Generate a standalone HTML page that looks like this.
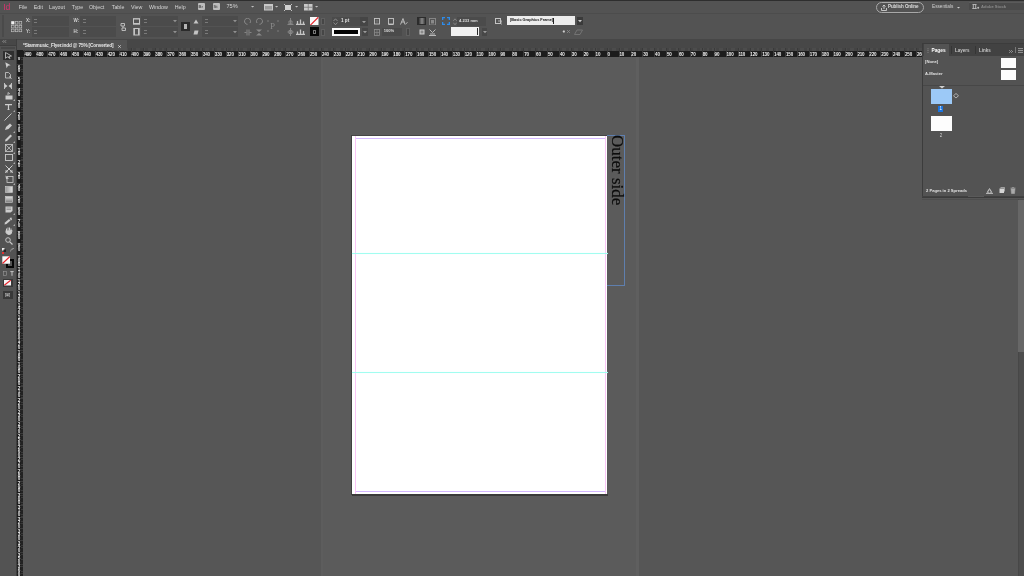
<!DOCTYPE html>
<html><head><meta charset="utf-8"><style>
*{margin:0;padding:0;box-sizing:border-box}
html,body{width:1024px;height:576px;overflow:hidden;background:#565656;font-family:"Liberation Sans",sans-serif;color:#ddd;position:relative}
.a{position:absolute}
.t{position:absolute;white-space:nowrap;line-height:1}
#root{position:absolute;left:0;top:0;width:1024px;height:576px;overflow:hidden;will-change:transform}
</style></head><body><div id="root">
<div class="a" style="left:0px;top:0px;width:1024px;height:1px;background:#2e2e2e"></div>
<div class="a" style="left:0px;top:1px;width:1024px;height:13px;background:#535353"></div>
<div class="a" style="left:0px;top:13px;width:1024px;height:1px;background:#4c4c4c"></div>
<div class="a" style="left:0px;top:14px;width:1024px;height:25px;background:#535353"></div>
<div class="a" style="left:0px;top:39px;width:1024px;height:9px;background:#474747"></div>
<div class="a" style="left:23px;top:57px;width:299px;height:519px;background:#565656"></div>
<div class="a" style="left:322px;top:57px;width:317px;height:519px;background:#5b5b5b"></div>
<div class="a" style="left:636px;top:57px;width:3px;height:519px;background:#5f5f5f"></div>
<div class="a" style="left:321px;top:57px;width:1.5px;height:519px;background:#5d5d5d"></div>
<div class="a" style="left:639px;top:57px;width:379px;height:519px;background:#565656"></div>
<div class="t" style="left:3.2px;top:3px;font-size:8.6px;color:#d6336f;letter-spacing:-0.2px">Id</div>
<div class="t" style="left:18.75px;top:4.5px;font-size:5.3px;color:#d6d6d6;">File</div>
<div class="t" style="left:33.75px;top:4.5px;font-size:5.3px;color:#d6d6d6;">Edit</div>
<div class="t" style="left:49px;top:4.5px;font-size:5.3px;color:#d6d6d6;">Layout</div>
<div class="t" style="left:71.75px;top:4.5px;font-size:5.3px;color:#d6d6d6;">Type</div>
<div class="t" style="left:89px;top:4.5px;font-size:5.3px;color:#d6d6d6;">Object</div>
<div class="t" style="left:111.75px;top:4.5px;font-size:5.3px;color:#d6d6d6;">Table</div>
<div class="t" style="left:131px;top:4.5px;font-size:5.3px;color:#d6d6d6;">View</div>
<div class="t" style="left:149px;top:4.5px;font-size:5.3px;color:#d6d6d6;">Window</div>
<div class="t" style="left:174.75px;top:4.5px;font-size:5.3px;color:#d6d6d6;">Help</div>
<div class="a" style="left:197.5px;top:3px;width:7px;height:7px;background:#bdbdbd;border-radius:1px"><div class="t" style="left:1px;top:1.5px;font-size:4px;color:#535353;font-weight:bold">Br</div></div>
<div class="a" style="left:212.5px;top:3px;width:7px;height:7px;background:#bdbdbd;border-radius:1px"><div class="t" style="left:1px;top:1.5px;font-size:4px;color:#535353;font-weight:bold">St</div></div>
<div class="t" style="left:226.5px;top:4.3px;font-size:5.6px;color:#d6d6d6;">75%</div>
<svg class="a" style="left:250.9px;top:6.2px;" width="3.2" height="2.6" viewBox="0 0 3.2 2.6"><path d="M0 0H3.2L1.6 1.6Z" fill="#bdbdbd"/></svg>
<svg class="a" style="left:264px;top:4px;" width="9" height="6.5" viewBox="0 0 9 6.5"><rect x="0" y="0" width="9" height="6.5" fill="#c8c8c8"/><rect x="1" y="2" width="7" height="3.5" fill="#9a9a9a"/></svg>
<svg class="a" style="left:274.9px;top:6.2px;" width="3.2" height="2.6" viewBox="0 0 3.2 2.6"><path d="M0 0H3.2L1.6 1.6Z" fill="#bdbdbd"/></svg>
<svg class="a" style="left:284px;top:3.5px;" width="8" height="7" viewBox="0 0 8 7"><rect x="1" y="1" width="6" height="5" fill="#cfcfcf"/><path d="M0 0L2 2M8 0L6 2M0 7L2 5M8 7L6 5" stroke="#cfcfcf" stroke-width="0.9"/></svg>
<svg class="a" style="left:294.9px;top:6.2px;" width="3.2" height="2.6" viewBox="0 0 3.2 2.6"><path d="M0 0H3.2L1.6 1.6Z" fill="#bdbdbd"/></svg>
<svg class="a" style="left:304px;top:4px;" width="8.5" height="6.5" viewBox="0 0 8.5 6.5"><rect x="0" y="0" width="8.5" height="6.5" fill="#c8c8c8"/><path d="M4.25 0V6.5M0 3.25H8.5" stroke="#777" stroke-width="0.8"/></svg>
<svg class="a" style="left:314.9px;top:6.2px;" width="3.2" height="2.6" viewBox="0 0 3.2 2.6"><path d="M0 0H3.2L1.6 1.6Z" fill="#bdbdbd"/></svg>
<div class="a" style="left:876px;top:2px;width:48px;height:10.5px;border:1px solid #a8a8a8;border-radius:6px"></div>
<svg class="a" style="left:880.5px;top:3.5px;" width="6" height="7" viewBox="0 0 6 7"><path d="M3 5V1M1.5 2.5L3 1L4.5 2.5M0.5 4V6.5H5.5V4" fill="none" stroke="#cfcfcf" stroke-width="0.9"/></svg>
<div class="t" style="left:888px;top:5.4px;font-size:4.55px;color:#dedede;font-weight:bold;letter-spacing:-0.1px">Publish Online</div>
<div class="t" style="left:932px;top:4.6px;font-size:4.7px;color:#d0d0d0;">Essentials</div>
<svg class="a" style="left:957.0px;top:7px;" width="3.0" height="2.5" viewBox="0 0 3.0 2.5"><path d="M0 0H3.0L1.5 1.5Z" fill="#cfcfcf"/></svg>
<div class="a" style="left:968.7px;top:1.6px;width:56px;height:8.6px;background:#4b4b4b;border-top:0.8px solid #5a5a5a"></div>
<svg class="a" style="left:972px;top:3.8px;" width="8" height="5" viewBox="0 0 8 5"><path d="M0.5 0.5H4.5M1.3 0.5V4.5M3.7 0.5V4.5M0.3 4.5H4.7" fill="none" stroke="#bdbdbd" stroke-width="0.9"/><circle cx="6.2" cy="3.8" r="1" fill="#bdbdbd"/></svg>
<div class="t" style="left:981px;top:4.8px;font-size:4.1px;color:#8a8a8a;font-weight:bold">Adobe Stock</div>
<div class="a" style="left:1.5px;top:15px;width:2.5px;height:22px;background:#4a4a4a"></div>
<svg class="a" style="left:10.5px;top:20.5px;" width="12" height="12" viewBox="0 0 12 12"><rect x="0.19999999999999996" y="0.19999999999999996" width="3.2" height="3.2" fill="#f0f0f0"/><rect x="4.3" y="0.5" width="2.6" height="2.6" fill="none" stroke="#bcbcbc" stroke-width="0.7"/><rect x="8.1" y="0.5" width="2.6" height="2.6" fill="none" stroke="#bcbcbc" stroke-width="0.7"/><rect x="0.5" y="4.3" width="2.6" height="2.6" fill="none" stroke="#bcbcbc" stroke-width="0.7"/><rect x="4.3" y="4.3" width="2.6" height="2.6" fill="none" stroke="#bcbcbc" stroke-width="0.7"/><rect x="8.1" y="4.3" width="2.6" height="2.6" fill="none" stroke="#bcbcbc" stroke-width="0.7"/><rect x="0.5" y="8.1" width="2.6" height="2.6" fill="none" stroke="#bcbcbc" stroke-width="0.7"/><rect x="4.3" y="8.1" width="2.6" height="2.6" fill="none" stroke="#bcbcbc" stroke-width="0.7"/><rect x="8.1" y="8.1" width="2.6" height="2.6" fill="none" stroke="#bcbcbc" stroke-width="0.7"/></svg>
<div class="t" style="left:26px;top:18.5px;font-size:4.5px;color:#d0d0d0;font-weight:bold">X:</div>
<div class="t" style="left:26px;top:29.5px;font-size:4.5px;color:#d0d0d0;font-weight:bold">Y:</div>
<div class="a" style="left:31.5px;top:16px;width:37.5px;height:10px;background:#4b4b4b"></div>
<div class="a" style="left:34.0px;top:18.5px;width:3px;height:1px;background:#7a7a7a"></div>
<div class="a" style="left:34.0px;top:22px;width:3px;height:1px;background:#7a7a7a"></div>
<div class="a" style="left:31.5px;top:27px;width:37.5px;height:10px;background:#4b4b4b"></div>
<div class="a" style="left:34.0px;top:29.5px;width:3px;height:1px;background:#7a7a7a"></div>
<div class="a" style="left:34.0px;top:33px;width:3px;height:1px;background:#7a7a7a"></div>
<div class="t" style="left:73.5px;top:18.5px;font-size:4.5px;color:#d0d0d0;font-weight:bold">W:</div>
<div class="t" style="left:73.5px;top:29.5px;font-size:4.5px;color:#d0d0d0;font-weight:bold">H:</div>
<div class="a" style="left:80px;top:16px;width:36px;height:10px;background:#4b4b4b"></div>
<div class="a" style="left:82.5px;top:18.5px;width:3px;height:1px;background:#7a7a7a"></div>
<div class="a" style="left:82.5px;top:22px;width:3px;height:1px;background:#7a7a7a"></div>
<div class="a" style="left:80px;top:27px;width:36px;height:10px;background:#4b4b4b"></div>
<div class="a" style="left:82.5px;top:29.5px;width:3px;height:1px;background:#7a7a7a"></div>
<div class="a" style="left:82.5px;top:33px;width:3px;height:1px;background:#7a7a7a"></div>
<svg class="a" style="left:120px;top:22px;" width="6.5" height="10" viewBox="0 0 6.5 10"><path d="M1 1.5H4.5V4H1Z M2 6H5.5V8.5H2Z M3 4V6" fill="none" stroke="#c4c4c4" stroke-width="0.9"/></svg>
<svg class="a" style="left:133px;top:17.5px;" width="7" height="7" viewBox="0 0 7 7"><rect x="0.5" y="1" width="6" height="4.5" fill="none" stroke="#c4c4c4"/><path d="M0 0.5H7M0 6.5H7" stroke="#c4c4c4" stroke-width="0.7"/></svg>
<svg class="a" style="left:133px;top:28px;" width="7" height="7.5" viewBox="0 0 7 7.5"><rect x="1.5" y="0.5" width="4" height="6.5" fill="none" stroke="#c4c4c4"/><path d="M0.5 0V7.5M6.5 0V7.5" stroke="#c4c4c4" stroke-width="0.7"/></svg>
<div class="a" style="left:141px;top:16px;width:37px;height:10px;background:#4b4b4b"></div>
<div class="a" style="left:143.5px;top:18.5px;width:3px;height:1px;background:#7a7a7a"></div>
<div class="a" style="left:143.5px;top:22px;width:3px;height:1px;background:#7a7a7a"></div>
<svg class="a" style="left:173px;top:20.0px;" width="4" height="2.5" viewBox="0 0 4 2.5"><path d="M0 0H4L2 2.2Z" fill="#8f8f8f"/></svg>
<div class="a" style="left:141px;top:27px;width:37px;height:10px;background:#4b4b4b"></div>
<div class="a" style="left:143.5px;top:29.5px;width:3px;height:1px;background:#7a7a7a"></div>
<div class="a" style="left:143.5px;top:33px;width:3px;height:1px;background:#7a7a7a"></div>
<svg class="a" style="left:173px;top:31.0px;" width="4" height="2.5" viewBox="0 0 4 2.5"><path d="M0 0H4L2 2.2Z" fill="#8f8f8f"/></svg>
<div class="a" style="left:181px;top:22px;width:9px;height:8.5px;background:#2b2b2b"></div>
<div class="a" style="left:184px;top:23.5px;width:3px;height:5.5px;background:#b5b5b5"></div>
<svg class="a" style="left:193px;top:18.5px;" width="6" height="5" viewBox="0 0 6 5"><path d="M0.5 4.5L3 0.5L5.5 4.5Z" fill="#c4c4c4"/></svg>
<svg class="a" style="left:193px;top:29.5px;" width="6" height="5" viewBox="0 0 6 5"><path d="M1.5 0.5H5.5L4.5 4.5H0.5Z" fill="#c4c4c4"/></svg>
<div class="a" style="left:202px;top:16px;width:36px;height:10px;background:#4b4b4b"></div>
<div class="a" style="left:204.5px;top:18.5px;width:3px;height:1px;background:#7a7a7a"></div>
<div class="a" style="left:204.5px;top:22px;width:3px;height:1px;background:#7a7a7a"></div>
<svg class="a" style="left:233px;top:20.0px;" width="4" height="2.5" viewBox="0 0 4 2.5"><path d="M0 0H4L2 2.2Z" fill="#8f8f8f"/></svg>
<div class="a" style="left:202px;top:27px;width:36px;height:10px;background:#4b4b4b"></div>
<div class="a" style="left:204.5px;top:29.5px;width:3px;height:1px;background:#7a7a7a"></div>
<div class="a" style="left:204.5px;top:33px;width:3px;height:1px;background:#7a7a7a"></div>
<svg class="a" style="left:233px;top:31.0px;" width="4" height="2.5" viewBox="0 0 4 2.5"><path d="M0 0H4L2 2.2Z" fill="#8f8f8f"/></svg>
<svg class="a" style="left:244px;top:18px;" width="8" height="7" viewBox="0 0 8 7"><path d="M6 5A3 3 0 1 0 3.5 6.3" fill="none" stroke="#8a8a8a" stroke-width="1"/></svg>
<svg class="a" style="left:255px;top:18px;" width="8" height="7" viewBox="0 0 8 7"><path d="M2 5A3 3 0 1 1 4.5 6.3" fill="none" stroke="#8a8a8a" stroke-width="1"/></svg>
<svg class="a" style="left:244px;top:28.5px;" width="8" height="7" viewBox="0 0 8 7"><path d="M3 0.5V6.5M5 0.5V6.5M0.5 3.5H2.5M5.5 3.5H7.5" stroke="#8a8a8a" stroke-width="0.9"/></svg>
<svg class="a" style="left:255px;top:28.5px;" width="8" height="7" viewBox="0 0 8 7"><path d="M1 0.5H7L4 3ZM1 6.5H7L4 4Z" fill="#8a8a8a"/></svg>
<svg class="a" style="left:267px;top:19px;" width="12" height="13" viewBox="0 0 12 13"><text x="3" y="10" font-size="9" font-family="Liberation Serif" fill="#8a8a8a">P</text><circle cx="1" cy="2" r="0.7" fill="#8a8a8a"/><circle cx="11" cy="2" r="0.7" fill="#8a8a8a"/><circle cx="1" cy="12" r="0.7" fill="#8a8a8a"/><circle cx="11" cy="12" r="0.7" fill="#8a8a8a"/></svg>
<svg class="a" style="left:286.5px;top:17.5px;" width="7" height="7.5" viewBox="0 0 7 7.5"><path d="M3.5 0V6M0.5 6.5H6.5M2 3H5V6H2Z" stroke="#8a8a8a" fill="none" stroke-width="0.9"/></svg>
<svg class="a" style="left:286.5px;top:28px;" width="7" height="8" viewBox="0 0 7 8"><path d="M3.5 0V8M0.5 4H6.5M2 2.5H5V5.5H2Z" stroke="#8a8a8a" fill="none" stroke-width="0.9"/></svg>
<svg class="a" style="left:296px;top:18.5px;" width="9" height="6" viewBox="0 0 9 6"><path d="M0 5.5H9M1.5 5V2M4.5 5V0.5M7.5 5V2.5" stroke="#c4c4c4" stroke-width="1.3"/></svg>
<svg class="a" style="left:296px;top:29px;" width="9" height="6" viewBox="0 0 9 6"><path d="M0 5.5H9M1.5 5V2.5M4.5 5V0.5M7.5 5V2" stroke="#c4c4c4" stroke-width="1.3"/></svg>
<svg class="a" style="left:310px;top:16.5px;" width="8.5" height="8.5" viewBox="0 0 8.5 8.5"><rect x="0" y="0" width="8.5" height="8.5" fill="#fafafa"/><path d="M0.3 8.2L8.2 0.3" stroke="#e8232a" stroke-width="1.2"/></svg>
<div class="a" style="left:310px;top:27px;width:8.5px;height:9px;background:#080808"></div>
<div class="a" style="left:312.5px;top:29.5px;width:3.5px;height:4px;border:0.8px solid #777"></div>
<div class="a" style="left:320.5px;top:17.5px;width:4.5px;height:7.5px;background:#464646;border:0.8px solid #5f5f5f"></div>
<div class="a" style="left:320.5px;top:28.5px;width:4.5px;height:7.5px;background:#464646;border:0.8px solid #5f5f5f"></div>
<div class="a" style="left:332px;top:17px;width:36px;height:8.5px;background:#4b4b4b"></div>
<svg class="a" style="left:333px;top:17.5px;" width="5" height="7.5" viewBox="0 0 5 7.5"><path d="M0.5 3L2.5 0.8L4.5 3M0.5 4.5L2.5 6.7L4.5 4.5" fill="none" stroke="#9a9a9a" stroke-width="0.8"/></svg>
<div class="t" style="left:341px;top:19px;font-size:4.6px;color:#e0e0e0;font-weight:bold">1 pt</div>
<div class="a" style="left:360px;top:17px;width:8px;height:8.5px;background:#454545"></div>
<svg class="a" style="left:362px;top:20.5px;" width="4" height="2.5" viewBox="0 0 4 2.5"><path d="M0 0H4L2 2.2Z" fill="#9a9a9a"/></svg>
<div class="a" style="left:332px;top:27.5px;width:28px;height:8.5px;background:#fbfbfb"></div>
<div class="a" style="left:334px;top:30px;width:24px;height:3.5px;background:#050505"></div>
<div class="a" style="left:361.5px;top:27.5px;width:6.5px;height:8.5px;background:#474747"></div>
<svg class="a" style="left:363px;top:31px;" width="4" height="2.5" viewBox="0 0 4 2.5"><path d="M0 0H4L2 2.2Z" fill="#9a9a9a"/></svg>
<svg class="a" style="left:374px;top:18px;" width="6" height="7" viewBox="0 0 6 7"><rect x="0.5" y="0.5" width="5" height="5.5" fill="none" stroke="#c4c4c4" stroke-width="0.9"/><rect x="1.8" y="1.8" width="2.4" height="3" fill="#6a6a6a"/></svg>
<svg class="a" style="left:388px;top:18px;" width="6" height="7" viewBox="0 0 6 7"><rect x="0.5" y="0.5" width="5" height="5.5" fill="none" stroke="#c4c4c4" stroke-width="0.9"/><path d="M0.5 6.5H5.5" stroke="#c4c4c4"/></svg>
<svg class="a" style="left:400px;top:18px;" width="8" height="7" viewBox="0 0 8 7"><path d="M0.5 6.5L3 0.5L5 6.5M1.5 4H4.5M5.5 6L7.5 4.5" fill="none" stroke="#c4c4c4" stroke-width="0.9"/></svg>
<svg class="a" style="left:374px;top:28.5px;" width="6" height="7" viewBox="0 0 6 7"><rect x="0.5" y="0.5" width="5" height="6" fill="none" stroke="#8f8f8f" stroke-width="0.8"/><path d="M3 0.5V6.5M0.5 3.5H5.5" stroke="#8f8f8f" stroke-width="0.6"/></svg>
<div class="a" style="left:382px;top:27.5px;width:20px;height:8px;background:#4b4b4b"></div>
<div class="t" style="left:383.7px;top:29.4px;font-size:4.1px;color:#dedede;font-weight:bold">100%</div>
<div class="a" style="left:406px;top:28px;width:3.5px;height:7.5px;background:#464646;border:0.8px solid #5f5f5f"></div>
<div class="a" style="left:417px;top:16.5px;width:8.5px;height:8.5px;background:#2c2c2c"></div>
<svg class="a" style="left:418.5px;top:18px;" width="6" height="6" viewBox="0 0 6 6"><path d="M0.5 1H5.5M0.5 3H5.5M0.5 5H5.5" stroke="#b8b8b8" stroke-width="0.8"/><path d="M3 0V6" stroke="#b8b8b8" stroke-width="0.6"/></svg>
<svg class="a" style="left:429px;top:17.5px;" width="7" height="7.5" viewBox="0 0 7 7.5"><rect x="0.5" y="0.5" width="6" height="6.5" fill="none" stroke="#8a8a8a" stroke-width="0.9"/><rect x="2" y="2" width="3" height="3.5" fill="#8a8a8a"/></svg>
<svg class="a" style="left:419px;top:28.5px;" width="6" height="6" viewBox="0 0 6 6"><rect x="0.5" y="0.5" width="5" height="5" fill="#d0d0d0"/><rect x="1.5" y="1.5" width="3" height="3" fill="#8a8a8a"/></svg>
<svg class="a" style="left:429px;top:28.5px;" width="7" height="7" viewBox="0 0 7 7"><path d="M0.5 0.5L3.5 3.5L6.5 0.5M0 6.5H7M1 5H6" fill="none" stroke="#c4c4c4" stroke-width="0.9"/></svg>
<svg class="a" style="left:441.5px;top:16.5px;" width="8" height="8" viewBox="0 0 8 8"><path d="M0.5 3V0.5H3M5 0.5H7.5V3M7.5 5V7.5H5M3 7.5H0.5V5" fill="none" stroke="#2d8ceb" stroke-width="1.6"/></svg>
<svg class="a" style="left:452.5px;top:17.5px;" width="4" height="7.5" viewBox="0 0 4 7.5"><path d="M0.3 2.8L2 0.8L3.7 2.8M0.3 4.7L2 6.7L3.7 4.7" fill="none" stroke="#9a9a9a" stroke-width="0.7"/></svg>
<div class="a" style="left:457px;top:17px;width:29px;height:8.5px;background:#4b4b4b"></div>
<div class="t" style="left:459px;top:19.2px;font-size:4.1px;color:#dedede;font-weight:bold">4.233 mm</div>
<svg class="a" style="left:494.5px;top:17.5px;" width="7" height="7" viewBox="0 0 7 7"><rect x="0.5" y="0.5" width="5" height="5" fill="none" stroke="#c4c4c4" stroke-width="1"/><path d="M3 3H7V7" fill="none" stroke="#c4c4c4" stroke-width="0.8"/></svg>
<div class="a" style="left:507px;top:16px;width:68px;height:9px;background:#ececec"></div>
<div class="t" style="left:510px;top:18.8px;font-size:3.85px;color:#111;font-weight:bold">[Basic Graphics Frame]</div>
<div class="a" style="left:553.4px;top:17.5px;width:0.7px;height:6.5px;background:#222"></div>
<div class="a" style="left:576.5px;top:16.5px;width:6px;height:8.5px;background:#3a3a3a"></div>
<svg class="a" style="left:577.5px;top:20px;" width="4" height="2.5" viewBox="0 0 4 2.5"><path d="M0 0H4L2 2.2Z" fill="#c8c8c8"/></svg>
<div class="a" style="left:451px;top:27px;width:28px;height:9px;background:#f1f1f1"></div>
<div class="a" style="left:477px;top:28px;width:1px;height:7px;background:#2a2a2a"></div>
<div class="a" style="left:481.5px;top:27.5px;width:5px;height:8.5px;background:#474747"></div>
<svg class="a" style="left:482.5px;top:31px;" width="4" height="2.5" viewBox="0 0 4 2.5"><path d="M0 0H4L2 2.2Z" fill="#9a9a9a"/></svg>
<svg class="a" style="left:562px;top:29px;" width="10" height="5" viewBox="0 0 10 5"><path d="M0.5 2.5L2 1L3 2.5L2 4Z" fill="#cfcfcf"/><path d="M5 1L8 4M8 1L5 4" stroke="#8a8a8a" stroke-width="0.8"/></svg>
<svg class="a" style="left:574px;top:28.5px;" width="9" height="6" viewBox="0 0 9 6"><path d="M0.5 5.5L3 1H8.5L6 5.5Z" fill="none" stroke="#777" stroke-width="0.9"/></svg>
<div class="a" style="left:17px;top:48px;width:906px;height:2.5px;background:#444;background-image:repeating-linear-gradient(90deg,#535353 0 0.6px,transparent 0.6px 2.38px);background-position:0.5px 0"></div>
<div class="a" style="left:17px;top:50.5px;width:906px;height:6.5px;background:#1c1c1c"></div>
<div class="a" style="left:23.6px;top:48px;width:0.6px;height:9px;background:#3a3a3a"></div>
<div class="t" style="left:24.4px;top:52.6px;font-size:4.5px;color:#f0f0f0;letter-spacing:-0.15px;font-weight:bold">490</div>
<div class="a" style="left:35.5px;top:48px;width:0.6px;height:9px;background:#3a3a3a"></div>
<div class="t" style="left:36.3px;top:52.6px;font-size:4.5px;color:#f0f0f0;letter-spacing:-0.15px;font-weight:bold">480</div>
<div class="a" style="left:47.4px;top:48px;width:0.6px;height:9px;background:#3a3a3a"></div>
<div class="t" style="left:48.2px;top:52.6px;font-size:4.5px;color:#f0f0f0;letter-spacing:-0.15px;font-weight:bold">470</div>
<div class="a" style="left:59.3px;top:48px;width:0.6px;height:9px;background:#3a3a3a"></div>
<div class="t" style="left:60.1px;top:52.6px;font-size:4.5px;color:#f0f0f0;letter-spacing:-0.15px;font-weight:bold">460</div>
<div class="a" style="left:71.2px;top:48px;width:0.6px;height:9px;background:#3a3a3a"></div>
<div class="t" style="left:72.0px;top:52.6px;font-size:4.5px;color:#f0f0f0;letter-spacing:-0.15px;font-weight:bold">450</div>
<div class="a" style="left:83.1px;top:48px;width:0.6px;height:9px;background:#3a3a3a"></div>
<div class="t" style="left:83.9px;top:52.6px;font-size:4.5px;color:#f0f0f0;letter-spacing:-0.15px;font-weight:bold">440</div>
<div class="a" style="left:95.0px;top:48px;width:0.6px;height:9px;background:#3a3a3a"></div>
<div class="t" style="left:95.8px;top:52.6px;font-size:4.5px;color:#f0f0f0;letter-spacing:-0.15px;font-weight:bold">430</div>
<div class="a" style="left:106.9px;top:48px;width:0.6px;height:9px;background:#3a3a3a"></div>
<div class="t" style="left:107.7px;top:52.6px;font-size:4.5px;color:#f0f0f0;letter-spacing:-0.15px;font-weight:bold">420</div>
<div class="a" style="left:118.8px;top:48px;width:0.6px;height:9px;background:#3a3a3a"></div>
<div class="t" style="left:119.6px;top:52.6px;font-size:4.5px;color:#f0f0f0;letter-spacing:-0.15px;font-weight:bold">410</div>
<div class="a" style="left:130.7px;top:48px;width:0.6px;height:9px;background:#3a3a3a"></div>
<div class="t" style="left:131.5px;top:52.6px;font-size:4.5px;color:#f0f0f0;letter-spacing:-0.15px;font-weight:bold">400</div>
<div class="a" style="left:142.6px;top:48px;width:0.6px;height:9px;background:#3a3a3a"></div>
<div class="t" style="left:143.4px;top:52.6px;font-size:4.5px;color:#f0f0f0;letter-spacing:-0.15px;font-weight:bold">390</div>
<div class="a" style="left:154.5px;top:48px;width:0.6px;height:9px;background:#3a3a3a"></div>
<div class="t" style="left:155.3px;top:52.6px;font-size:4.5px;color:#f0f0f0;letter-spacing:-0.15px;font-weight:bold">380</div>
<div class="a" style="left:166.4px;top:48px;width:0.6px;height:9px;background:#3a3a3a"></div>
<div class="t" style="left:167.2px;top:52.6px;font-size:4.5px;color:#f0f0f0;letter-spacing:-0.15px;font-weight:bold">370</div>
<div class="a" style="left:178.3px;top:48px;width:0.6px;height:9px;background:#3a3a3a"></div>
<div class="t" style="left:179.1px;top:52.6px;font-size:4.5px;color:#f0f0f0;letter-spacing:-0.15px;font-weight:bold">360</div>
<div class="a" style="left:190.2px;top:48px;width:0.6px;height:9px;background:#3a3a3a"></div>
<div class="t" style="left:191.0px;top:52.6px;font-size:4.5px;color:#f0f0f0;letter-spacing:-0.15px;font-weight:bold">350</div>
<div class="a" style="left:202.1px;top:48px;width:0.6px;height:9px;background:#3a3a3a"></div>
<div class="t" style="left:202.9px;top:52.6px;font-size:4.5px;color:#f0f0f0;letter-spacing:-0.15px;font-weight:bold">340</div>
<div class="a" style="left:214.0px;top:48px;width:0.6px;height:9px;background:#3a3a3a"></div>
<div class="t" style="left:214.8px;top:52.6px;font-size:4.5px;color:#f0f0f0;letter-spacing:-0.15px;font-weight:bold">330</div>
<div class="a" style="left:225.9px;top:48px;width:0.6px;height:9px;background:#3a3a3a"></div>
<div class="t" style="left:226.7px;top:52.6px;font-size:4.5px;color:#f0f0f0;letter-spacing:-0.15px;font-weight:bold">320</div>
<div class="a" style="left:237.8px;top:48px;width:0.6px;height:9px;background:#3a3a3a"></div>
<div class="t" style="left:238.6px;top:52.6px;font-size:4.5px;color:#f0f0f0;letter-spacing:-0.15px;font-weight:bold">310</div>
<div class="a" style="left:249.7px;top:48px;width:0.6px;height:9px;background:#3a3a3a"></div>
<div class="t" style="left:250.5px;top:52.6px;font-size:4.5px;color:#f0f0f0;letter-spacing:-0.15px;font-weight:bold">300</div>
<div class="a" style="left:261.6px;top:48px;width:0.6px;height:9px;background:#3a3a3a"></div>
<div class="t" style="left:262.4px;top:52.6px;font-size:4.5px;color:#f0f0f0;letter-spacing:-0.15px;font-weight:bold">290</div>
<div class="a" style="left:273.5px;top:48px;width:0.6px;height:9px;background:#3a3a3a"></div>
<div class="t" style="left:274.3px;top:52.6px;font-size:4.5px;color:#f0f0f0;letter-spacing:-0.15px;font-weight:bold">280</div>
<div class="a" style="left:285.4px;top:48px;width:0.6px;height:9px;background:#3a3a3a"></div>
<div class="t" style="left:286.2px;top:52.6px;font-size:4.5px;color:#f0f0f0;letter-spacing:-0.15px;font-weight:bold">270</div>
<div class="a" style="left:297.3px;top:48px;width:0.6px;height:9px;background:#3a3a3a"></div>
<div class="t" style="left:298.1px;top:52.6px;font-size:4.5px;color:#f0f0f0;letter-spacing:-0.15px;font-weight:bold">260</div>
<div class="a" style="left:309.2px;top:48px;width:0.6px;height:9px;background:#3a3a3a"></div>
<div class="t" style="left:310.0px;top:52.6px;font-size:4.5px;color:#f0f0f0;letter-spacing:-0.15px;font-weight:bold">250</div>
<div class="a" style="left:321.1px;top:48px;width:0.6px;height:9px;background:#3a3a3a"></div>
<div class="t" style="left:321.9px;top:52.6px;font-size:4.5px;color:#f0f0f0;letter-spacing:-0.15px;font-weight:bold">240</div>
<div class="a" style="left:333.0px;top:48px;width:0.6px;height:9px;background:#3a3a3a"></div>
<div class="t" style="left:333.8px;top:52.6px;font-size:4.5px;color:#f0f0f0;letter-spacing:-0.15px;font-weight:bold">230</div>
<div class="a" style="left:344.9px;top:48px;width:0.6px;height:9px;background:#3a3a3a"></div>
<div class="t" style="left:345.7px;top:52.6px;font-size:4.5px;color:#f0f0f0;letter-spacing:-0.15px;font-weight:bold">220</div>
<div class="a" style="left:356.8px;top:48px;width:0.6px;height:9px;background:#3a3a3a"></div>
<div class="t" style="left:357.6px;top:52.6px;font-size:4.5px;color:#f0f0f0;letter-spacing:-0.15px;font-weight:bold">210</div>
<div class="a" style="left:368.7px;top:48px;width:0.6px;height:9px;background:#3a3a3a"></div>
<div class="t" style="left:369.5px;top:52.6px;font-size:4.5px;color:#f0f0f0;letter-spacing:-0.15px;font-weight:bold">200</div>
<div class="a" style="left:380.6px;top:48px;width:0.6px;height:9px;background:#3a3a3a"></div>
<div class="t" style="left:381.4px;top:52.6px;font-size:4.5px;color:#f0f0f0;letter-spacing:-0.15px;font-weight:bold">190</div>
<div class="a" style="left:392.5px;top:48px;width:0.6px;height:9px;background:#3a3a3a"></div>
<div class="t" style="left:393.3px;top:52.6px;font-size:4.5px;color:#f0f0f0;letter-spacing:-0.15px;font-weight:bold">180</div>
<div class="a" style="left:404.4px;top:48px;width:0.6px;height:9px;background:#3a3a3a"></div>
<div class="t" style="left:405.2px;top:52.6px;font-size:4.5px;color:#f0f0f0;letter-spacing:-0.15px;font-weight:bold">170</div>
<div class="a" style="left:416.3px;top:48px;width:0.6px;height:9px;background:#3a3a3a"></div>
<div class="t" style="left:417.1px;top:52.6px;font-size:4.5px;color:#f0f0f0;letter-spacing:-0.15px;font-weight:bold">160</div>
<div class="a" style="left:428.2px;top:48px;width:0.6px;height:9px;background:#3a3a3a"></div>
<div class="t" style="left:429.0px;top:52.6px;font-size:4.5px;color:#f0f0f0;letter-spacing:-0.15px;font-weight:bold">150</div>
<div class="a" style="left:440.1px;top:48px;width:0.6px;height:9px;background:#3a3a3a"></div>
<div class="t" style="left:440.9px;top:52.6px;font-size:4.5px;color:#f0f0f0;letter-spacing:-0.15px;font-weight:bold">140</div>
<div class="a" style="left:452.0px;top:48px;width:0.6px;height:9px;background:#3a3a3a"></div>
<div class="t" style="left:452.8px;top:52.6px;font-size:4.5px;color:#f0f0f0;letter-spacing:-0.15px;font-weight:bold">130</div>
<div class="a" style="left:463.9px;top:48px;width:0.6px;height:9px;background:#3a3a3a"></div>
<div class="t" style="left:464.7px;top:52.6px;font-size:4.5px;color:#f0f0f0;letter-spacing:-0.15px;font-weight:bold">120</div>
<div class="a" style="left:475.8px;top:48px;width:0.6px;height:9px;background:#3a3a3a"></div>
<div class="t" style="left:476.6px;top:52.6px;font-size:4.5px;color:#f0f0f0;letter-spacing:-0.15px;font-weight:bold">110</div>
<div class="a" style="left:487.7px;top:48px;width:0.6px;height:9px;background:#3a3a3a"></div>
<div class="t" style="left:488.5px;top:52.6px;font-size:4.5px;color:#f0f0f0;letter-spacing:-0.15px;font-weight:bold">100</div>
<div class="a" style="left:499.6px;top:48px;width:0.6px;height:9px;background:#3a3a3a"></div>
<div class="t" style="left:500.4px;top:52.6px;font-size:4.5px;color:#f0f0f0;letter-spacing:-0.15px;font-weight:bold">90</div>
<div class="a" style="left:511.5px;top:48px;width:0.6px;height:9px;background:#3a3a3a"></div>
<div class="t" style="left:512.3px;top:52.6px;font-size:4.5px;color:#f0f0f0;letter-spacing:-0.15px;font-weight:bold">80</div>
<div class="a" style="left:523.4px;top:48px;width:0.6px;height:9px;background:#3a3a3a"></div>
<div class="t" style="left:524.2px;top:52.6px;font-size:4.5px;color:#f0f0f0;letter-spacing:-0.15px;font-weight:bold">70</div>
<div class="a" style="left:535.3px;top:48px;width:0.6px;height:9px;background:#3a3a3a"></div>
<div class="t" style="left:536.1px;top:52.6px;font-size:4.5px;color:#f0f0f0;letter-spacing:-0.15px;font-weight:bold">60</div>
<div class="a" style="left:547.2px;top:48px;width:0.6px;height:9px;background:#3a3a3a"></div>
<div class="t" style="left:548.0px;top:52.6px;font-size:4.5px;color:#f0f0f0;letter-spacing:-0.15px;font-weight:bold">50</div>
<div class="a" style="left:559.1px;top:48px;width:0.6px;height:9px;background:#3a3a3a"></div>
<div class="t" style="left:559.9px;top:52.6px;font-size:4.5px;color:#f0f0f0;letter-spacing:-0.15px;font-weight:bold">40</div>
<div class="a" style="left:571.0px;top:48px;width:0.6px;height:9px;background:#3a3a3a"></div>
<div class="t" style="left:571.8px;top:52.6px;font-size:4.5px;color:#f0f0f0;letter-spacing:-0.15px;font-weight:bold">30</div>
<div class="a" style="left:582.9px;top:48px;width:0.6px;height:9px;background:#3a3a3a"></div>
<div class="t" style="left:583.7px;top:52.6px;font-size:4.5px;color:#f0f0f0;letter-spacing:-0.15px;font-weight:bold">20</div>
<div class="a" style="left:594.8px;top:48px;width:0.6px;height:9px;background:#3a3a3a"></div>
<div class="t" style="left:595.6px;top:52.6px;font-size:4.5px;color:#f0f0f0;letter-spacing:-0.15px;font-weight:bold">10</div>
<div class="a" style="left:606.7px;top:48px;width:0.6px;height:9px;background:#3a3a3a"></div>
<div class="t" style="left:607.5px;top:52.6px;font-size:4.5px;color:#f0f0f0;letter-spacing:-0.15px;font-weight:bold">0</div>
<div class="a" style="left:618.6px;top:48px;width:0.6px;height:9px;background:#3a3a3a"></div>
<div class="t" style="left:619.4px;top:52.6px;font-size:4.5px;color:#f0f0f0;letter-spacing:-0.15px;font-weight:bold">10</div>
<div class="a" style="left:630.5px;top:48px;width:0.6px;height:9px;background:#3a3a3a"></div>
<div class="t" style="left:631.3px;top:52.6px;font-size:4.5px;color:#f0f0f0;letter-spacing:-0.15px;font-weight:bold">20</div>
<div class="a" style="left:642.4px;top:48px;width:0.6px;height:9px;background:#3a3a3a"></div>
<div class="t" style="left:643.2px;top:52.6px;font-size:4.5px;color:#f0f0f0;letter-spacing:-0.15px;font-weight:bold">30</div>
<div class="a" style="left:654.3px;top:48px;width:0.6px;height:9px;background:#3a3a3a"></div>
<div class="t" style="left:655.1px;top:52.6px;font-size:4.5px;color:#f0f0f0;letter-spacing:-0.15px;font-weight:bold">40</div>
<div class="a" style="left:666.2px;top:48px;width:0.6px;height:9px;background:#3a3a3a"></div>
<div class="t" style="left:667.0px;top:52.6px;font-size:4.5px;color:#f0f0f0;letter-spacing:-0.15px;font-weight:bold">50</div>
<div class="a" style="left:678.1px;top:48px;width:0.6px;height:9px;background:#3a3a3a"></div>
<div class="t" style="left:678.9px;top:52.6px;font-size:4.5px;color:#f0f0f0;letter-spacing:-0.15px;font-weight:bold">60</div>
<div class="a" style="left:690.0px;top:48px;width:0.6px;height:9px;background:#3a3a3a"></div>
<div class="t" style="left:690.8px;top:52.6px;font-size:4.5px;color:#f0f0f0;letter-spacing:-0.15px;font-weight:bold">70</div>
<div class="a" style="left:701.9px;top:48px;width:0.6px;height:9px;background:#3a3a3a"></div>
<div class="t" style="left:702.7px;top:52.6px;font-size:4.5px;color:#f0f0f0;letter-spacing:-0.15px;font-weight:bold">80</div>
<div class="a" style="left:713.8px;top:48px;width:0.6px;height:9px;background:#3a3a3a"></div>
<div class="t" style="left:714.6px;top:52.6px;font-size:4.5px;color:#f0f0f0;letter-spacing:-0.15px;font-weight:bold">90</div>
<div class="a" style="left:725.7px;top:48px;width:0.6px;height:9px;background:#3a3a3a"></div>
<div class="t" style="left:726.5px;top:52.6px;font-size:4.5px;color:#f0f0f0;letter-spacing:-0.15px;font-weight:bold">100</div>
<div class="a" style="left:737.6px;top:48px;width:0.6px;height:9px;background:#3a3a3a"></div>
<div class="t" style="left:738.4px;top:52.6px;font-size:4.5px;color:#f0f0f0;letter-spacing:-0.15px;font-weight:bold">110</div>
<div class="a" style="left:749.5px;top:48px;width:0.6px;height:9px;background:#3a3a3a"></div>
<div class="t" style="left:750.3px;top:52.6px;font-size:4.5px;color:#f0f0f0;letter-spacing:-0.15px;font-weight:bold">120</div>
<div class="a" style="left:761.4px;top:48px;width:0.6px;height:9px;background:#3a3a3a"></div>
<div class="t" style="left:762.2px;top:52.6px;font-size:4.5px;color:#f0f0f0;letter-spacing:-0.15px;font-weight:bold">130</div>
<div class="a" style="left:773.3px;top:48px;width:0.6px;height:9px;background:#3a3a3a"></div>
<div class="t" style="left:774.1px;top:52.6px;font-size:4.5px;color:#f0f0f0;letter-spacing:-0.15px;font-weight:bold">140</div>
<div class="a" style="left:785.2px;top:48px;width:0.6px;height:9px;background:#3a3a3a"></div>
<div class="t" style="left:786.0px;top:52.6px;font-size:4.5px;color:#f0f0f0;letter-spacing:-0.15px;font-weight:bold">150</div>
<div class="a" style="left:797.1px;top:48px;width:0.6px;height:9px;background:#3a3a3a"></div>
<div class="t" style="left:797.9px;top:52.6px;font-size:4.5px;color:#f0f0f0;letter-spacing:-0.15px;font-weight:bold">160</div>
<div class="a" style="left:809.0px;top:48px;width:0.6px;height:9px;background:#3a3a3a"></div>
<div class="t" style="left:809.8px;top:52.6px;font-size:4.5px;color:#f0f0f0;letter-spacing:-0.15px;font-weight:bold">170</div>
<div class="a" style="left:820.9px;top:48px;width:0.6px;height:9px;background:#3a3a3a"></div>
<div class="t" style="left:821.7px;top:52.6px;font-size:4.5px;color:#f0f0f0;letter-spacing:-0.15px;font-weight:bold">180</div>
<div class="a" style="left:832.8px;top:48px;width:0.6px;height:9px;background:#3a3a3a"></div>
<div class="t" style="left:833.6px;top:52.6px;font-size:4.5px;color:#f0f0f0;letter-spacing:-0.15px;font-weight:bold">190</div>
<div class="a" style="left:844.7px;top:48px;width:0.6px;height:9px;background:#3a3a3a"></div>
<div class="t" style="left:845.5px;top:52.6px;font-size:4.5px;color:#f0f0f0;letter-spacing:-0.15px;font-weight:bold">200</div>
<div class="a" style="left:856.6px;top:48px;width:0.6px;height:9px;background:#3a3a3a"></div>
<div class="t" style="left:857.4px;top:52.6px;font-size:4.5px;color:#f0f0f0;letter-spacing:-0.15px;font-weight:bold">210</div>
<div class="a" style="left:868.5px;top:48px;width:0.6px;height:9px;background:#3a3a3a"></div>
<div class="t" style="left:869.3px;top:52.6px;font-size:4.5px;color:#f0f0f0;letter-spacing:-0.15px;font-weight:bold">220</div>
<div class="a" style="left:880.4px;top:48px;width:0.6px;height:9px;background:#3a3a3a"></div>
<div class="t" style="left:881.2px;top:52.6px;font-size:4.5px;color:#f0f0f0;letter-spacing:-0.15px;font-weight:bold">230</div>
<div class="a" style="left:892.3px;top:48px;width:0.6px;height:9px;background:#3a3a3a"></div>
<div class="t" style="left:893.1px;top:52.6px;font-size:4.5px;color:#f0f0f0;letter-spacing:-0.15px;font-weight:bold">240</div>
<div class="a" style="left:904.2px;top:48px;width:0.6px;height:9px;background:#3a3a3a"></div>
<div class="t" style="left:905.0px;top:52.6px;font-size:4.5px;color:#f0f0f0;letter-spacing:-0.15px;font-weight:bold">250</div>
<div class="a" style="left:916.1px;top:48px;width:0.6px;height:9px;background:#3a3a3a"></div>
<div class="t" style="left:916.9px;top:52.6px;font-size:4.5px;color:#f0f0f0;letter-spacing:-0.15px;font-weight:bold">260</div>
<div class="a" style="left:17px;top:57px;width:6px;height:519px;background:#1c1c1c"></div>
<div class="a" style="left:20.5px;top:57px;width:2.5px;height:519px;background:#222;background-image:repeating-linear-gradient(180deg,#383838 0 0.6px,transparent 0.6px 2.38px)"></div>
<div class="a" style="left:17px;top:52.4px;width:6px;height:0.6px;background:#3a3a3a"></div>
<div class="t" style="left:17.3px;top:53.7px;font-size:4.6px;line-height:3.6px;color:#e6e6e6;font-weight:bold;text-align:center;width:3.4px;white-space:normal">7<br>0</div>
<div class="a" style="left:17px;top:64.3px;width:6px;height:0.6px;background:#3a3a3a"></div>
<div class="t" style="left:17.3px;top:65.6px;font-size:4.6px;line-height:3.6px;color:#e6e6e6;font-weight:bold;text-align:center;width:3.4px;white-space:normal">6<br>0</div>
<div class="a" style="left:17px;top:76.2px;width:6px;height:0.6px;background:#3a3a3a"></div>
<div class="t" style="left:17.3px;top:77.5px;font-size:4.6px;line-height:3.6px;color:#e6e6e6;font-weight:bold;text-align:center;width:3.4px;white-space:normal">5<br>0</div>
<div class="a" style="left:17px;top:88.1px;width:6px;height:0.6px;background:#3a3a3a"></div>
<div class="t" style="left:17.3px;top:89.4px;font-size:4.6px;line-height:3.6px;color:#e6e6e6;font-weight:bold;text-align:center;width:3.4px;white-space:normal">4<br>0</div>
<div class="a" style="left:17px;top:100.0px;width:6px;height:0.6px;background:#3a3a3a"></div>
<div class="t" style="left:17.3px;top:101.3px;font-size:4.6px;line-height:3.6px;color:#e6e6e6;font-weight:bold;text-align:center;width:3.4px;white-space:normal">3<br>0</div>
<div class="a" style="left:17px;top:111.9px;width:6px;height:0.6px;background:#3a3a3a"></div>
<div class="t" style="left:17.3px;top:113.2px;font-size:4.6px;line-height:3.6px;color:#e6e6e6;font-weight:bold;text-align:center;width:3.4px;white-space:normal">2<br>0</div>
<div class="a" style="left:17px;top:123.8px;width:6px;height:0.6px;background:#3a3a3a"></div>
<div class="t" style="left:17.3px;top:125.1px;font-size:4.6px;line-height:3.6px;color:#e6e6e6;font-weight:bold;text-align:center;width:3.4px;white-space:normal">1<br>0</div>
<div class="a" style="left:17px;top:135.7px;width:6px;height:0.6px;background:#3a3a3a"></div>
<div class="t" style="left:17.3px;top:137.0px;font-size:4.6px;line-height:3.6px;color:#e6e6e6;font-weight:bold;text-align:center;width:3.4px;white-space:normal">0</div>
<div class="a" style="left:17px;top:147.6px;width:6px;height:0.6px;background:#3a3a3a"></div>
<div class="t" style="left:17.3px;top:148.9px;font-size:4.6px;line-height:3.6px;color:#e6e6e6;font-weight:bold;text-align:center;width:3.4px;white-space:normal">1<br>0</div>
<div class="a" style="left:17px;top:159.5px;width:6px;height:0.6px;background:#3a3a3a"></div>
<div class="t" style="left:17.3px;top:160.8px;font-size:4.6px;line-height:3.6px;color:#e6e6e6;font-weight:bold;text-align:center;width:3.4px;white-space:normal">2<br>0</div>
<div class="a" style="left:17px;top:171.4px;width:6px;height:0.6px;background:#3a3a3a"></div>
<div class="t" style="left:17.3px;top:172.7px;font-size:4.6px;line-height:3.6px;color:#e6e6e6;font-weight:bold;text-align:center;width:3.4px;white-space:normal">3<br>0</div>
<div class="a" style="left:17px;top:183.3px;width:6px;height:0.6px;background:#3a3a3a"></div>
<div class="t" style="left:17.3px;top:184.6px;font-size:4.6px;line-height:3.6px;color:#e6e6e6;font-weight:bold;text-align:center;width:3.4px;white-space:normal">4<br>0</div>
<div class="a" style="left:17px;top:195.2px;width:6px;height:0.6px;background:#3a3a3a"></div>
<div class="t" style="left:17.3px;top:196.5px;font-size:4.6px;line-height:3.6px;color:#e6e6e6;font-weight:bold;text-align:center;width:3.4px;white-space:normal">5<br>0</div>
<div class="a" style="left:17px;top:207.1px;width:6px;height:0.6px;background:#3a3a3a"></div>
<div class="t" style="left:17.3px;top:208.4px;font-size:4.6px;line-height:3.6px;color:#e6e6e6;font-weight:bold;text-align:center;width:3.4px;white-space:normal">6<br>0</div>
<div class="a" style="left:17px;top:219.0px;width:6px;height:0.6px;background:#3a3a3a"></div>
<div class="t" style="left:17.3px;top:220.3px;font-size:4.6px;line-height:3.6px;color:#e6e6e6;font-weight:bold;text-align:center;width:3.4px;white-space:normal">7<br>0</div>
<div class="a" style="left:17px;top:230.9px;width:6px;height:0.6px;background:#3a3a3a"></div>
<div class="t" style="left:17.3px;top:232.2px;font-size:4.6px;line-height:3.6px;color:#e6e6e6;font-weight:bold;text-align:center;width:3.4px;white-space:normal">8<br>0</div>
<div class="a" style="left:17px;top:242.8px;width:6px;height:0.6px;background:#3a3a3a"></div>
<div class="t" style="left:17.3px;top:244.1px;font-size:4.6px;line-height:3.6px;color:#e6e6e6;font-weight:bold;text-align:center;width:3.4px;white-space:normal">9<br>0</div>
<div class="a" style="left:17px;top:254.7px;width:6px;height:0.6px;background:#3a3a3a"></div>
<div class="t" style="left:17.3px;top:256.0px;font-size:4.6px;line-height:3.6px;color:#e6e6e6;font-weight:bold;text-align:center;width:3.4px;white-space:normal">1<br>0<br>0</div>
<div class="a" style="left:17px;top:266.6px;width:6px;height:0.6px;background:#3a3a3a"></div>
<div class="t" style="left:17.3px;top:267.9px;font-size:4.6px;line-height:3.6px;color:#e6e6e6;font-weight:bold;text-align:center;width:3.4px;white-space:normal">1<br>1<br>0</div>
<div class="a" style="left:17px;top:278.5px;width:6px;height:0.6px;background:#3a3a3a"></div>
<div class="t" style="left:17.3px;top:279.8px;font-size:4.6px;line-height:3.6px;color:#e6e6e6;font-weight:bold;text-align:center;width:3.4px;white-space:normal">1<br>2<br>0</div>
<div class="a" style="left:17px;top:290.4px;width:6px;height:0.6px;background:#3a3a3a"></div>
<div class="t" style="left:17.3px;top:291.7px;font-size:4.6px;line-height:3.6px;color:#e6e6e6;font-weight:bold;text-align:center;width:3.4px;white-space:normal">1<br>3<br>0</div>
<div class="a" style="left:17px;top:302.3px;width:6px;height:0.6px;background:#3a3a3a"></div>
<div class="t" style="left:17.3px;top:303.6px;font-size:4.6px;line-height:3.6px;color:#e6e6e6;font-weight:bold;text-align:center;width:3.4px;white-space:normal">1<br>4<br>0</div>
<div class="a" style="left:17px;top:314.2px;width:6px;height:0.6px;background:#3a3a3a"></div>
<div class="t" style="left:17.3px;top:315.5px;font-size:4.6px;line-height:3.6px;color:#e6e6e6;font-weight:bold;text-align:center;width:3.4px;white-space:normal">1<br>5<br>0</div>
<div class="a" style="left:17px;top:326.1px;width:6px;height:0.6px;background:#3a3a3a"></div>
<div class="t" style="left:17.3px;top:327.4px;font-size:4.6px;line-height:3.6px;color:#e6e6e6;font-weight:bold;text-align:center;width:3.4px;white-space:normal">1<br>6<br>0</div>
<div class="a" style="left:17px;top:338.0px;width:6px;height:0.6px;background:#3a3a3a"></div>
<div class="t" style="left:17.3px;top:339.3px;font-size:4.6px;line-height:3.6px;color:#e6e6e6;font-weight:bold;text-align:center;width:3.4px;white-space:normal">1<br>7<br>0</div>
<div class="a" style="left:17px;top:349.9px;width:6px;height:0.6px;background:#3a3a3a"></div>
<div class="t" style="left:17.3px;top:351.2px;font-size:4.6px;line-height:3.6px;color:#e6e6e6;font-weight:bold;text-align:center;width:3.4px;white-space:normal">1<br>8<br>0</div>
<div class="a" style="left:17px;top:361.8px;width:6px;height:0.6px;background:#3a3a3a"></div>
<div class="t" style="left:17.3px;top:363.1px;font-size:4.6px;line-height:3.6px;color:#e6e6e6;font-weight:bold;text-align:center;width:3.4px;white-space:normal">1<br>9<br>0</div>
<div class="a" style="left:17px;top:373.7px;width:6px;height:0.6px;background:#3a3a3a"></div>
<div class="t" style="left:17.3px;top:375.0px;font-size:4.6px;line-height:3.6px;color:#e6e6e6;font-weight:bold;text-align:center;width:3.4px;white-space:normal">2<br>0<br>0</div>
<div class="a" style="left:17px;top:385.6px;width:6px;height:0.6px;background:#3a3a3a"></div>
<div class="t" style="left:17.3px;top:386.9px;font-size:4.6px;line-height:3.6px;color:#e6e6e6;font-weight:bold;text-align:center;width:3.4px;white-space:normal">2<br>1<br>0</div>
<div class="a" style="left:17px;top:397.5px;width:6px;height:0.6px;background:#3a3a3a"></div>
<div class="t" style="left:17.3px;top:398.8px;font-size:4.6px;line-height:3.6px;color:#e6e6e6;font-weight:bold;text-align:center;width:3.4px;white-space:normal">2<br>2<br>0</div>
<div class="a" style="left:17px;top:409.4px;width:6px;height:0.6px;background:#3a3a3a"></div>
<div class="t" style="left:17.3px;top:410.7px;font-size:4.6px;line-height:3.6px;color:#e6e6e6;font-weight:bold;text-align:center;width:3.4px;white-space:normal">2<br>3<br>0</div>
<div class="a" style="left:17px;top:421.3px;width:6px;height:0.6px;background:#3a3a3a"></div>
<div class="t" style="left:17.3px;top:422.6px;font-size:4.6px;line-height:3.6px;color:#e6e6e6;font-weight:bold;text-align:center;width:3.4px;white-space:normal">2<br>4<br>0</div>
<div class="a" style="left:17px;top:433.2px;width:6px;height:0.6px;background:#3a3a3a"></div>
<div class="t" style="left:17.3px;top:434.5px;font-size:4.6px;line-height:3.6px;color:#e6e6e6;font-weight:bold;text-align:center;width:3.4px;white-space:normal">2<br>5<br>0</div>
<div class="a" style="left:17px;top:445.1px;width:6px;height:0.6px;background:#3a3a3a"></div>
<div class="t" style="left:17.3px;top:446.4px;font-size:4.6px;line-height:3.6px;color:#e6e6e6;font-weight:bold;text-align:center;width:3.4px;white-space:normal">2<br>6<br>0</div>
<div class="a" style="left:17px;top:457.0px;width:6px;height:0.6px;background:#3a3a3a"></div>
<div class="t" style="left:17.3px;top:458.3px;font-size:4.6px;line-height:3.6px;color:#e6e6e6;font-weight:bold;text-align:center;width:3.4px;white-space:normal">2<br>7<br>0</div>
<div class="a" style="left:17px;top:468.9px;width:6px;height:0.6px;background:#3a3a3a"></div>
<div class="t" style="left:17.3px;top:470.2px;font-size:4.6px;line-height:3.6px;color:#e6e6e6;font-weight:bold;text-align:center;width:3.4px;white-space:normal">2<br>8<br>0</div>
<div class="a" style="left:17px;top:480.8px;width:6px;height:0.6px;background:#3a3a3a"></div>
<div class="t" style="left:17.3px;top:482.1px;font-size:4.6px;line-height:3.6px;color:#e6e6e6;font-weight:bold;text-align:center;width:3.4px;white-space:normal">2<br>9<br>0</div>
<div class="a" style="left:17px;top:492.7px;width:6px;height:0.6px;background:#3a3a3a"></div>
<div class="t" style="left:17.3px;top:494.0px;font-size:4.6px;line-height:3.6px;color:#e6e6e6;font-weight:bold;text-align:center;width:3.4px;white-space:normal">3<br>0<br>0</div>
<div class="a" style="left:17px;top:504.6px;width:6px;height:0.6px;background:#3a3a3a"></div>
<div class="t" style="left:17.3px;top:505.9px;font-size:4.6px;line-height:3.6px;color:#e6e6e6;font-weight:bold;text-align:center;width:3.4px;white-space:normal">3<br>1<br>0</div>
<div class="a" style="left:17px;top:516.5px;width:6px;height:0.6px;background:#3a3a3a"></div>
<div class="t" style="left:17.3px;top:517.8px;font-size:4.6px;line-height:3.6px;color:#e6e6e6;font-weight:bold;text-align:center;width:3.4px;white-space:normal">3<br>2<br>0</div>
<div class="a" style="left:17px;top:528.4px;width:6px;height:0.6px;background:#3a3a3a"></div>
<div class="t" style="left:17.3px;top:529.7px;font-size:4.6px;line-height:3.6px;color:#e6e6e6;font-weight:bold;text-align:center;width:3.4px;white-space:normal">3<br>3<br>0</div>
<div class="a" style="left:17px;top:540.3px;width:6px;height:0.6px;background:#3a3a3a"></div>
<div class="t" style="left:17.3px;top:541.6px;font-size:4.6px;line-height:3.6px;color:#e6e6e6;font-weight:bold;text-align:center;width:3.4px;white-space:normal">3<br>4<br>0</div>
<div class="a" style="left:17px;top:552.2px;width:6px;height:0.6px;background:#3a3a3a"></div>
<div class="t" style="left:17.3px;top:553.5px;font-size:4.6px;line-height:3.6px;color:#e6e6e6;font-weight:bold;text-align:center;width:3.4px;white-space:normal">3<br>5<br>0</div>
<div class="a" style="left:17px;top:564.1px;width:6px;height:0.6px;background:#3a3a3a"></div>
<div class="t" style="left:17.3px;top:565.4px;font-size:4.6px;line-height:3.6px;color:#e6e6e6;font-weight:bold;text-align:center;width:3.4px;white-space:normal">3<br>6<br>0</div>
<div class="a" style="left:17px;top:48px;width:6px;height:9px;background:#1c1c1c"></div>
<div class="a" style="left:17px;top:40px;width:110px;height:9.5px;background:#535353"></div>
<div class="t" style="left:23px;top:43.6px;font-size:4.75px;color:#e6e6e6;font-weight:bold;letter-spacing:-0.17px">*Stammusic_Flyer.indd @ 75% [Converted]</div>
<svg class="a" style="left:117.5px;top:44.5px;" width="3" height="3" viewBox="0 0 3 3"><path d="M0.3 0.3L2.7 2.7M2.7 0.3L0.3 2.7" stroke="#ddd" stroke-width="0.8"/></svg>
<div class="a" style="left:0px;top:39px;width:16px;height:537px;background:#535353"></div>
<div class="a" style="left:16px;top:39px;width:1px;height:537px;background:#3e3e3e"></div>
<div class="a" style="left:0px;top:39px;width:16px;height:6px;background:#474747"></div>
<svg class="a" style="left:2px;top:40px;" width="5" height="3" viewBox="0 0 5 3"><path d="M2.5 0L0.5 1.5L2.5 3M4.5 0L2.5 1.5L4.5 3" fill="none" stroke="#a0a0a0" stroke-width="0.6"/></svg>
<div class="a" style="left:0px;top:45px;width:16px;height:0.8px;background:#3e3e3e"></div>
<div class="a" style="left:1px;top:47px;width:14px;height:1.6px;background:#474747"></div>
<div class="a" style="left:2.5px;top:51px;width:11px;height:8.5px;background:#2f2f2f"></div>
<svg class="a" style="left:5px;top:52px;" width="7" height="7" viewBox="0 0 7 7"><path d="M0.5 0.5L6.5 4L3.8 4.5L5 6.5L2.2 4.8L0.5 6.3Z" fill="none" stroke="#cdcdcd" stroke-width="0.8"/></svg>
<svg class="a" style="left:4.8px;top:62.3px;" width="6" height="6.5" viewBox="0 0 6 6.5"><path d="M0.3 0.3L5.7 3.3L3 3.8L1.6 6.2Z" fill="#cdcdcd"/></svg>
<svg class="a" style="left:5px;top:72px;" width="6.5" height="6.5" viewBox="0 0 6.5 6.5"><path d="M0.5 0.5H3.5L5.5 2.5V6H0.5Z" fill="none" stroke="#cdcdcd" stroke-width="0.8"/><path d="M4 4.5L6.5 6.5" stroke="#cdcdcd" stroke-width="1"/></svg>
<svg class="a" style="left:4px;top:82.5px;" width="8" height="6" viewBox="0 0 8 6"><path d="M0.5 0V6M7.5 0V6" stroke="#cdcdcd" stroke-width="0.9"/><path d="M1 1L3.5 3L1 5ZM7 1L4.5 3L7 5Z" fill="#cdcdcd"/></svg>
<svg class="a" style="left:4.5px;top:92px;" width="8" height="8" viewBox="0 0 8 8"><path d="M0.5 3.5H7.5V7.5H0.5Z" fill="#cdcdcd"/><path d="M3 3V0.5L5 2" fill="none" stroke="#cdcdcd" stroke-width="0.8"/></svg>
<svg class="a" style="left:13px;top:99px;" width="2" height="2" viewBox="0 0 2 2"><path d="M0 2H2V0Z" fill="#aaa"/></svg>
<svg class="a" style="left:4.8px;top:103.5px;" width="7" height="6.5" viewBox="0 0 7 6.5"><path d="M0.5 1.2V0.6H6.5V1.2M3.5 0.6V6M2.2 6H4.8" fill="none" stroke="#cdcdcd" stroke-width="1.2"/></svg>
<svg class="a" style="left:13px;top:110px;" width="2" height="2" viewBox="0 0 2 2"><path d="M0 2H2V0Z" fill="#aaa"/></svg>
<svg class="a" style="left:4px;top:112.5px;" width="8" height="8" viewBox="0 0 8 8"><path d="M0.5 7.5L7.5 0.5" stroke="#cdcdcd" stroke-width="0.9"/></svg>
<svg class="a" style="left:4px;top:123px;" width="9" height="8" viewBox="0 0 9 8"><path d="M1 7L2 4L6 0.5L8 2.5L4.5 6Z" fill="#cdcdcd"/></svg>
<svg class="a" style="left:13px;top:131px;" width="2" height="2" viewBox="0 0 2 2"><path d="M0 2H2V0Z" fill="#aaa"/></svg>
<svg class="a" style="left:4px;top:133.5px;" width="9" height="8" viewBox="0 0 9 8"><path d="M1 7.5L1.5 5.5L6.5 0.5L8 2L3 7Z" fill="#cdcdcd"/></svg>
<svg class="a" style="left:13px;top:141px;" width="2" height="2" viewBox="0 0 2 2"><path d="M0 2H2V0Z" fill="#aaa"/></svg>
<svg class="a" style="left:4.5px;top:143.5px;" width="8" height="8" viewBox="0 0 8 8"><rect x="0.5" y="0.5" width="7" height="7" fill="none" stroke="#cdcdcd" stroke-width="0.8"/><path d="M0.5 0.5L7.5 7.5M7.5 0.5L0.5 7.5" stroke="#cdcdcd" stroke-width="0.7"/></svg>
<svg class="a" style="left:13px;top:152px;" width="2" height="2" viewBox="0 0 2 2"><path d="M0 2H2V0Z" fill="#aaa"/></svg>
<svg class="a" style="left:4.5px;top:154px;" width="8" height="7" viewBox="0 0 8 7"><rect x="0.5" y="0.5" width="7" height="6" fill="none" stroke="#cdcdcd" stroke-width="0.9"/></svg>
<svg class="a" style="left:13px;top:162px;" width="2" height="2" viewBox="0 0 2 2"><path d="M0 2H2V0Z" fill="#aaa"/></svg>
<svg class="a" style="left:4.5px;top:164.5px;" width="8" height="8" viewBox="0 0 8 8"><path d="M0.5 0.5L7.5 7.5M7.5 0.5L0.5 7.5" stroke="#cdcdcd" stroke-width="1"/><circle cx="1.3" cy="6.7" r="1.2" fill="none" stroke="#cdcdcd" stroke-width="0.7"/><circle cx="6.7" cy="6.7" r="1.2" fill="none" stroke="#cdcdcd" stroke-width="0.7"/></svg>
<svg class="a" style="left:4.5px;top:175px;" width="9" height="8" viewBox="0 0 9 8"><rect x="2" y="1.5" width="6" height="6" fill="none" stroke="#cdcdcd" stroke-width="0.8"/><path d="M0.5 0.5L4 3.5L1 4Z" fill="#cdcdcd"/></svg>
<svg class="a" style="left:13px;top:183px;" width="2" height="2" viewBox="0 0 2 2"><path d="M0 2H2V0Z" fill="#aaa"/></svg>
<svg class="a" style="left:4.5px;top:185.5px;" width="8" height="7" viewBox="0 0 8 7"><defs><linearGradient id="gr1"><stop offset="0" stop-color="#999"/><stop offset="1" stop-color="#e0e0e0"/></linearGradient></defs><rect x="0.5" y="0.5" width="7" height="6" fill="url(#gr1)" stroke="#cdcdcd" stroke-width="0.6"/></svg>
<svg class="a" style="left:4.5px;top:195.5px;" width="8" height="7" viewBox="0 0 8 7"><defs><linearGradient id="gr2" x1="0" y1="0" x2="0" y2="1"><stop offset="0" stop-color="#e0e0e0"/><stop offset="1" stop-color="#777"/></linearGradient></defs><rect x="0.5" y="0.5" width="7" height="6" fill="url(#gr2)" stroke="#cdcdcd" stroke-width="0.6"/></svg>
<svg class="a" style="left:4.5px;top:206px;" width="8" height="7" viewBox="0 0 8 7"><path d="M0.5 0.5H7.5V5L5.5 6.5H0.5Z" fill="#cdcdcd"/><path d="M1.5 2H6M1.5 3.5H6" stroke="#666" stroke-width="0.5"/></svg>
<svg class="a" style="left:13px;top:213px;" width="2" height="2" viewBox="0 0 2 2"><path d="M0 2H2V0Z" fill="#aaa"/></svg>
<svg class="a" style="left:4px;top:216.5px;" width="9" height="8" viewBox="0 0 9 8"><path d="M0.5 7.5L1 5.5L5 2L6.5 3.5L2.5 7Z" fill="#cdcdcd"/><path d="M5.5 1L7.5 0.5L8 2.5L7 3.5Z" fill="#cdcdcd"/></svg>
<svg class="a" style="left:13px;top:224px;" width="2" height="2" viewBox="0 0 2 2"><path d="M0 2H2V0Z" fill="#aaa"/></svg>
<svg class="a" style="left:4.5px;top:226.5px;" width="8" height="8" viewBox="0 0 8 8"><path d="M1.5 4V1.5M3 3.5V0.5M4.5 3.5V0.5M6 3.5V1.5M1 3.5L1 5.5Q2 7.5 4 7.5Q6.8 7.5 6.8 4.5V3" fill="#cdcdcd" stroke="#cdcdcd" stroke-width="1"/></svg>
<svg class="a" style="left:4.5px;top:236.5px;" width="8" height="8" viewBox="0 0 8 8"><circle cx="3" cy="3" r="2.3" fill="none" stroke="#cdcdcd" stroke-width="0.9"/><path d="M4.8 4.8L7.5 7.5" stroke="#cdcdcd" stroke-width="1.2"/></svg>
<svg class="a" style="left:2px;top:247.5px;" width="4" height="4" viewBox="0 0 4 4"><rect x="0" y="0" width="2.5" height="2.5" fill="#eee"/><rect x="1.5" y="1.5" width="2.5" height="2.5" fill="#222"/></svg>
<svg class="a" style="left:10px;top:247.5px;" width="4" height="4" viewBox="0 0 4 4"><path d="M0.5 3.5Q0.5 0.5 3.5 0.5M2.5 0L3.5 0.5L2.5 1.5" fill="none" stroke="#bbb" stroke-width="0.6"/></svg>
<svg class="a" style="left:1.5px;top:251.5px;" width="2" height="2" viewBox="0 0 2 2"><rect width="2" height="2" fill="#e63030"/></svg>
<div class="a" style="left:5.5px;top:259px;width:8.5px;height:8.5px;background:#070707"></div>
<div class="a" style="left:7.5px;top:261px;width:4.5px;height:4.5px;background:#535353"></div>
<svg class="a" style="left:1.5px;top:255.5px;" width="8.5" height="8" viewBox="0 0 8.5 8"><rect x="0" y="0" width="8.5" height="8" fill="#fafafa" stroke="#333" stroke-width="0.5"/><path d="M0.5 7.5L8 0.5" stroke="#e8232a" stroke-width="1.2"/></svg>
<svg class="a" style="left:3px;top:270.5px;" width="4" height="5" viewBox="0 0 4 5"><rect x="0.5" y="0.5" width="3" height="4" fill="none" stroke="#9a9a9a" stroke-width="0.6"/></svg>
<svg class="a" style="left:10px;top:270.5px;" width="4" height="5" viewBox="0 0 4 5"><path d="M0.3 0.6H3.7M2 0.6V4.8" stroke="#cfcfcf" stroke-width="0.9"/></svg>
<div class="a" style="left:2.5px;top:278.5px;width:10px;height:8.5px;background:#383838"></div>
<svg class="a" style="left:4px;top:280px;" width="7" height="5.5" viewBox="0 0 7 5.5"><rect x="0" y="0" width="7" height="5.5" fill="#f5f5f5"/><path d="M0.3 5.3L6.7 0.2" stroke="#e8232a" stroke-width="1.2"/></svg>
<div class="a" style="left:2.5px;top:290.5px;width:10px;height:8.5px;background:#383838"></div>
<svg class="a" style="left:5px;top:292.5px;" width="5" height="4.5" viewBox="0 0 5 4.5"><rect x="0.3" y="0.3" width="4.4" height="3.9" fill="none" stroke="#aaa" stroke-width="0.6"/><rect x="1.3" y="1.2" width="2.4" height="2" fill="#aaa"/></svg>
<div class="a" style="left:351px;top:135px;width:257px;height:1px;background:#454545"></div>
<div class="a" style="left:351px;top:135px;width:1px;height:360px;background:#404040"></div>
<div class="a" style="left:352px;top:494px;width:256px;height:1.5px;background:#3a3a3a"></div>
<div class="a" style="left:352px;top:136px;width:255px;height:358px;background:#ffffff"></div>
<div class="a" style="left:355px;top:137.6px;width:250px;height:1px;background:#d4b8ff"></div>
<div class="a" style="left:355px;top:491px;width:250px;height:1px;background:#d4b8ff"></div>
<div class="a" style="left:354.5px;top:136px;width:1.2px;height:358px;background:#fbc6f7"></div>
<div class="a" style="left:604.6px;top:136px;width:1.2px;height:358px;background:#fbc6f7"></div>
<div class="a" style="left:352px;top:253px;width:256px;height:1px;background:#a2fdf0;box-shadow:0 0 0.8px #c8fff6"></div>
<div class="a" style="left:352px;top:372px;width:256px;height:1px;background:#a2fdf0;box-shadow:0 0 0.8px #c8fff6"></div>
<div class="a" style="left:607px;top:135px;width:17.5px;height:150.5px;border:1px solid #5f7fae;border-left:none"></div>
<div class="t" style="left:626px;top:135px;font-family:'Liberation Serif',serif;font-size:17px;color:#0c0c0c;-webkit-text-stroke:0.2px #0c0c0c;transform-origin:0 0;transform:rotate(90deg)">Outer side</div>
<div class="a" style="left:922px;top:43px;width:102px;height:155px;background:#3c3c3c"></div>
<div class="a" style="left:923px;top:43.6px;width:101px;height:0.6px;background:#505050"></div>
<div class="a" style="left:923px;top:44px;width:101px;height:12px;background:#424242"></div>
<div class="a" style="left:924px;top:44px;width:24.5px;height:12px;background:#535353"></div>
<svg class="a" style="left:927.3px;top:47.5px;" width="2" height="5" viewBox="0 0 2 5"><circle cx="1" cy="0.7" r="0.5" fill="#999"/><circle cx="1" cy="2.5" r="0.5" fill="#999"/><circle cx="1" cy="4.3" r="0.5" fill="#999"/></svg>
<div class="t" style="left:931.5px;top:48.8px;font-size:4.8px;color:#ffffff;font-weight:bold">Pages</div>
<div class="t" style="left:955px;top:49px;font-size:4.5px;color:#c4c4c4;font-weight:bold">Layers</div>
<div class="a" style="left:974.5px;top:46px;width:0.6px;height:8px;background:#353535"></div>
<div class="t" style="left:979px;top:49px;font-size:4.5px;color:#c4c4c4;font-weight:bold">Links</div>
<div class="a" style="left:951px;top:46px;width:0.6px;height:8px;background:#353535"></div>
<svg class="a" style="left:1008.5px;top:49.5px;" width="4" height="3" viewBox="0 0 4 3"><path d="M0.3 0.3L1.5 1.5L0.3 2.7M2.3 0.3L3.5 1.5L2.3 2.7" fill="none" stroke="#c8c8c8" stroke-width="0.7"/></svg>
<div class="a" style="left:1015px;top:47px;width:0.7px;height:6px;background:#777"></div>
<svg class="a" style="left:1017.5px;top:47.5px;" width="5" height="5" viewBox="0 0 5 5"><path d="M0 0.6H5M0 2.5H5M0 4.4H5" stroke="#bbb" stroke-width="0.7"/></svg>
<div class="a" style="left:923px;top:56px;width:101px;height:140px;background:#535353"></div>
<div class="t" style="left:925px;top:59.6px;font-size:4.2px;color:#e0e0e0;font-weight:bold">[None]</div>
<div class="a" style="left:1001px;top:57.5px;width:15px;height:10px;background:#fdfdfd"></div>
<div class="t" style="left:925px;top:72.2px;font-size:4.1px;color:#e0e0e0;font-weight:bold">A-Master</div>
<div class="a" style="left:1001px;top:69.5px;width:15px;height:10px;background:#fdfdfd"></div>
<div class="a" style="left:923px;top:84.5px;width:101px;height:0.8px;background:#474747"></div>
<svg class="a" style="left:938.5px;top:86px;" width="6" height="3" viewBox="0 0 6 3"><path d="M0 0H6L3 2.6Z" fill="#cfcfcf"/></svg>
<div class="a" style="left:931px;top:89px;width:21px;height:14.5px;background:#9cc9f7"></div>
<svg class="a" style="left:953px;top:93px;" width="6" height="5.5" viewBox="0 0 6 5.5"><path d="M3 0.5L5.5 2.75L3 5L0.5 2.75Z" fill="none" stroke="#c8c8c8" stroke-width="0.8"/></svg>
<div class="a" style="left:938.3px;top:106px;width:5px;height:6.3px;background:#1a74e0"></div>
<div class="t" style="left:939.6px;top:107.3px;font-size:4.5px;color:#ffffff;">1</div>
<div class="a" style="left:931px;top:116px;width:21px;height:14.5px;background:#fdfdfd"></div>
<div class="t" style="left:939.8px;top:133.8px;font-size:4.5px;color:#cfcfcf;">2</div>
<div class="t" style="left:926px;top:189.2px;font-size:4.1px;color:#e2e2e2;font-weight:bold">2 Pages in 2 Spreads</div>
<svg class="a" style="left:984.5px;top:187px;" width="9" height="7" viewBox="0 0 9 7"><path d="M1 6.5H8M2 6L4.5 1.5L7 6" fill="none" stroke="#c8c8c8" stroke-width="0.8"/><circle cx="4.5" cy="4.5" r="1.6" fill="none" stroke="#c8c8c8" stroke-width="0.7"/></svg>
<svg class="a" style="left:998.5px;top:187px;" width="6" height="6.5" viewBox="0 0 6 6.5"><rect x="0.5" y="1.5" width="4.5" height="4.5" fill="#d5d5d5"/><path d="M1.5 0.5H5.5V4.5" fill="none" stroke="#d5d5d5" stroke-width="0.6"/></svg>
<svg class="a" style="left:1009.5px;top:187px;" width="6" height="7" viewBox="0 0 6 7"><path d="M0.5 1H5.5M2 0.5H4M1 1.5L1.5 6.5H4.5L5 1.5" fill="#aaa" stroke="#aaa" stroke-width="0.6"/></svg>
<div class="a" style="left:922px;top:196px;width:102px;height:1.3px;background:#414141"></div>
<div class="a" style="left:922px;top:198.6px;width:102px;height:0.7px;background:#4e4e4e"></div>
<div class="a" style="left:968px;top:196.3px;width:16px;height:0.6px;background:#5a5a5a"></div>
<div class="a" style="left:1017.5px;top:199px;width:6.5px;height:377px;background:#4d4d4d;border-left:0.6px solid #474747"></div>
<div class="a" style="left:1018px;top:200px;width:6px;height:152px;background:#676767"></div>
</div></body></html>
